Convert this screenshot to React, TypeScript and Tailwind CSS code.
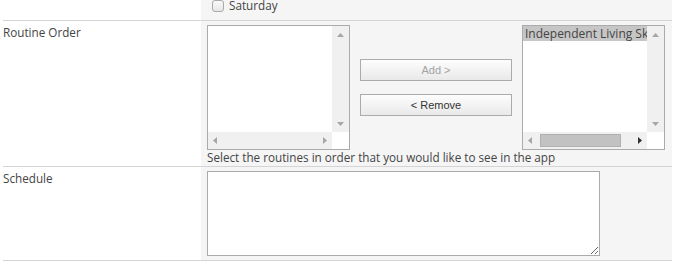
import React from "react";

const font = { fontFamily: '"Segoe UI", "Open Sans", "Liberation Sans", sans-serif' };

function Up({ c = "#a6a6a6" }: { c?: string }) {
  return (
    <svg width="7" height="4" viewBox="0 0 7 4"><path d="M3.5 0 L7 4 L0 4 Z" fill={c} /></svg>
  );
}
function Down({ c = "#a6a6a6" }: { c?: string }) {
  return (
    <svg width="7" height="4" viewBox="0 0 7 4"><path d="M0 0 L7 0 L3.5 4 Z" fill={c} /></svg>
  );
}
function Left({ c = "#a6a6a6" }: { c?: string }) {
  return (
    <svg width="4" height="7" viewBox="0 0 4 7"><path d="M4 0 L4 7 L0 3.5 Z" fill={c} /></svg>
  );
}
function Right({ c = "#a6a6a6" }: { c?: string }) {
  return (
    <svg width="4" height="7" viewBox="0 0 4 7"><path d="M0 0 L4 3.5 L0 7 Z" fill={c} /></svg>
  );
}

function ListBox({ items, thumb }: { items: string[]; thumb?: boolean }) {
  return (
    <div className="w-[143px] h-[125px] border border-[#ababab] bg-white flex flex-col">
      <div className="flex flex-1 min-h-0">
        <div className="flex-1 min-w-0 overflow-hidden">
          {items.map((it, i) => (
            <div
              key={i}
              className="h-[15px] leading-[15px] pl-[2px] whitespace-nowrap bg-[#c6c6c6] text-[12px] text-[#444]"
            >
              {it}
            </div>
          ))}
        </div>
        <div className="w-[17px] bg-[#f0f0f0] flex flex-col items-center justify-between pt-[7px] pb-[6px]">
          <Up />
          <Down />
        </div>
      </div>
      <div className="flex h-[17px]">
        <div className="flex-1 bg-[#f0f0f0] flex items-center justify-between px-[5px] relative">
          <Left />
          {thumb && (
            <div className="absolute left-[17px] top-[2px] w-[81px] h-[13px] bg-[#c2c2c2] border border-[#b0b0b0]" />
          )}
          <Right c={thumb ? "#303030" : "#a6a6a6"} />
        </div>
        <div className="w-[17px] bg-white" />
      </div>
    </div>
  );
}

function Btn({ children, disabled }: { children: React.ReactNode; disabled?: boolean }) {
  return (
    <div
      className={`w-[152px] h-[22px] border border-[#ababab] bg-gradient-to-b from-[#fdfdfd] to-[#e9e9e9] flex items-center justify-center text-[11px] ${disabled ? "text-[#a3a3a3]" : "text-[#333]"}`}
      style={{ fontFamily: '"Liberation Sans", Arial, sans-serif' }}
    >
      {children}
    </div>
  );
}

export default function App() {
  return (
    <div className="w-[676px] h-[273px] bg-white text-[#444] text-[11.7px]" style={font}>
      <div className="ml-[3px] w-[669px]">
        {/* Row 1 */}
        <div className="flex h-[21px] border-b border-[#d4d4d4]">
          <div className="w-[198px]" />
          <div className="flex-1 bg-[#f5f5f5] flex items-start pl-[11px]">
            <div className="w-[12px] h-[12px] rounded-[3px] border border-[#a9a9a9] bg-gradient-to-b from-[#fafafa] to-[#e6e6e6]" />
            <span className="ml-[5px] leading-[13px] -mt-[1px]">Saturday</span>
          </div>
        </div>
        {/* Row 2 */}
        <div className="flex h-[146px] border-b border-[#d4d4d4]">
          <div className="w-[198px] pt-[3px] leading-[17px]">Routine Order</div>
          <div className="flex-1 bg-[#f5f5f5] pl-[6px] pt-[4px]">
            <div className="flex items-center">
              <ListBox items={[]} />
              <div className="flex flex-col gap-[13px] mx-[10px]">
                <Btn disabled>Add &gt;</Btn>
                <Btn>&lt; Remove</Btn>
              </div>
              <ListBox items={["Independent Living Skills"]} thumb />
            </div>
            <div className="leading-[15px]">Select the routines in order that you would like to see in the app</div>
          </div>
        </div>
        {/* Row 3 */}
        <div className="flex h-[94px] border-b border-[#d4d4d4]">
          <div className="w-[198px] pt-[3px] leading-[17px]">Schedule</div>
          <div className="flex-1 bg-[#f5f5f5] pl-[6px] pt-[4px]">
            <textarea className="block w-[393px] h-[85px] border border-[#ababab] bg-white outline-none resize" />
          </div>
        </div>
      </div>
    </div>
  );
}
